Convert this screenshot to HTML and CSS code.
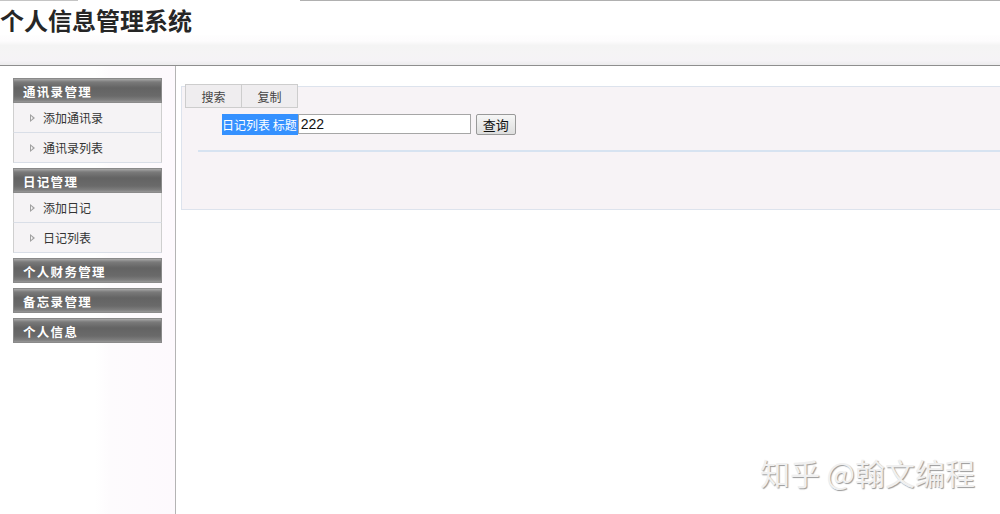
FILE: index.html
```html
<!DOCTYPE html>
<html>
<head>
<meta charset="utf-8">
<link rel="stylesheet" href="styles.css">
</head>
<body>
<div class="page">
  <div class="topline"><span class="tl1"></span><span class="tl2"></span></div>
  <div class="title">个人信息管理系统</div>
  <div class="band"></div>
  <div class="main">
    <div class="sidebar">
      <div class="group">
        <div class="ghead">通讯录管理</div>
        <div class="item"><span class="arr"></span>添加通讯录</div>
        <div class="item"><span class="arr"></span>通讯录列表</div>
      </div>
      <div class="group">
        <div class="ghead">日记管理</div>
        <div class="item"><span class="arr"></span>添加日记</div>
        <div class="item"><span class="arr"></span>日记列表</div>
      </div>
      <div class="group"><div class="ghead">个人财务管理</div></div>
      <div class="group"><div class="ghead">备忘录管理</div></div>
      <div class="group"><div class="ghead">个人信息</div></div>
    </div>
    <div class="content">
      <div class="panel">
        <div class="tabs"><div class="tab">搜索</div><div class="tab">复制</div></div>
        <div class="row">
          <span class="sel">日记列表 标题</span><span class="input">222</span><span class="btn">查询</span>
        </div>
        <div class="rule"></div>
      </div>
      <div class="watermark">知乎 @翰文编程</div>
    </div>
  </div>
</div>
</body>
</html>
```
FILE: styles.css
```css
html, body {
  margin: 0;
  padding: 0;
  overflow: hidden;
  background: #fff;
}
body {
  font-family: "Noto Sans CJK SC", "Liberation Sans", sans-serif;
  width: 1000px;
  height: 514px;
}
.page {
  position: relative;
  width: 1000px;
  height: 514px;
  overflow: hidden;
}
.topline {
  height: 0;
  display: flex;
  justify-content: space-between;
}
.tl1 {
  display: block;
  width: 78px;
  border-top: 1px solid #c4c4c4;
}
.tl2 {
  display: block;
  width: 700px;
  border-top: 1px solid #b0b0b0;
}
.title {
  height: 35px;
  font-size: 24px;
  font-weight: bold;
  color: #262626;
  line-height: 40px;
  letter-spacing: 0;
}
.band {
  height: 30px;
  background: linear-gradient(#fefefe 0%, #fdfcfd 20%, #f4f4f4 35%, #f5f4f5 60%, #f5f3f6 85%, #ececed 100%);
  border-bottom: 1px solid #8e8e8e;
}
.main {
  display: flex;
  height: 448px;
}
.sidebar {
  width: 149px;
  padding: 12px 13px 0 13px;
  border-right: 1px solid #b4b4b4;
  background: linear-gradient(90deg, #fff 0, #fff 95px, #fdfbfd 110px, #fdf9fd 175px);
}
.group {
  margin-bottom: 5px;
}
.ghead {
  height: 23px;
  border: 1px solid #8a8a8a;
  background: linear-gradient(#a8a8a8 0, #7a7a7a 3px, #636363 9px, #6a6a6a 17px, #7e7e7e 21px, #979797 23px);
  color: #fff;
  font-size: 12.5px;
  font-weight: bold;
  letter-spacing: 1.3px;
  line-height: 25px;
  padding-left: 9px;
}
.item {
  height: 29px;
  border-left: 1px solid #cfcfcf;
  border-right: 1px solid #cfcfcf;
  border-bottom: 1px solid #d9dee7;
  background: #f5f3f5;
  font-size: 12px;
  color: #333;
  line-height: 29px;
  display: flex;
  align-items: center;
}
.arr {
  width: 0;
  height: 0;
  border-top: 4px solid transparent;
  border-bottom: 4px solid transparent;
  border-left: 5px solid #a0a0a0;
  margin-left: 16px;
  margin-right: 8px;
  position: relative;
}
.arr::after {
  content: "";
  position: absolute;
  left: -4px;
  top: -2px;
  border-top: 2px solid transparent;
  border-bottom: 2px solid transparent;
  border-left: 2.5px solid #f5f3f5;
}
.content {
  flex: 1;
  padding: 20px 0 0 5px;
  position: relative;
}
.panel {
  height: 122px;
  margin-right: -5px;
  border: 1px solid #dde3ed;
  background: #f7f3f6;
}
.tabs {
  display: flex;
  margin: -3px 0 0 3px;
}
.tab {
  width: 55px;
  height: 22px;
  border: 1px solid #cdcdcd;
  border-left-width: 0;
  background: #efedef;
  font-size: 12px;
  color: #444;
  text-align: center;
  line-height: 23px;
}
.tab:first-child {
  border-left-width: 1px;
}
.row {
  display: flex;
  align-items: center;
  margin: 5px 0 0 40px;
  height: 22px;
}
.sel {
  background: #3591ff;
  color: #fff;
  font-size: 12px;
  height: 21px;
  line-height: 21px;
  display: inline-block;
  padding-right: 1px;
}
.input {
  width: 169px;
  height: 18px;
  border: 1px solid #a6a6a6;
  background: #fff;
  font-family: "Liberation Sans", sans-serif;
  font-size: 14px;
  line-height: 18px;
  padding-left: 2px;
  color: #111;
}
.btn {
  margin-left: 5px;
  width: 38px;
  height: 19px;
  border: 1px solid #999;
  border-radius: 2px;
  background: linear-gradient(#f6f6f6, #dedede);
  font-size: 13px;
  line-height: 19px;
  text-align: center;
  color: #111;
}
.rule {
  margin: 15px 0 0 16px;
  height: 2px;
  background: #d7e3f1;
}
.watermark {
  position: absolute;
  right: 25px;
  bottom: 20px;
  font-size: 30px;
  color: #f0f0f0;
  text-shadow: 1px 1px 1px #9a9a9a, -1px -1px 0 #fff;
  letter-spacing: 0;
}
```
